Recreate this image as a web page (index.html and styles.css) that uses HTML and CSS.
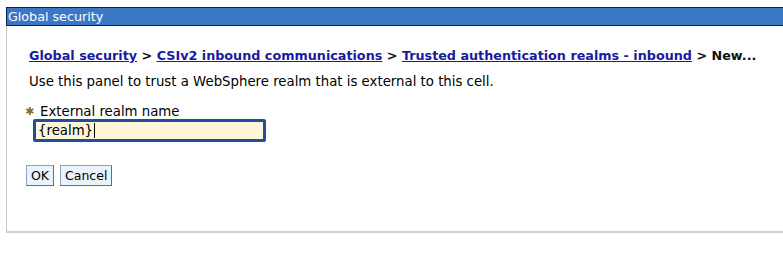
FILE: index.html
```html
<!DOCTYPE html>
<html>
<head>
<meta charset="utf-8">
<link rel="stylesheet" href="styles.css">
</head>
<body>
<div class="page">
  <div class="titlebar">Global security</div>
  <div class="panel">
    <div class="crumbs">
      <a href="#">Global security</a> &gt; <a href="#">CSIv2 inbound communications</a> &gt; <a href="#">Trusted authentication realms - inbound</a> &gt; New...
    </div>
    <p class="desc">Use this panel to trust a WebSphere realm that is external to this cell.</p>
    <div class="field">
      <div class="label"><span class="req">&#10033;</span>External realm name</div>
      <div class="input">{realm}<span class="caret"></span></div>
    </div>
    <div class="buttons">
      <button class="btn">OK</button>
      <button class="btn">Cancel</button>
    </div>
  </div>
</div>
</body>
</html>
```
FILE: styles.css
```css
html, body { margin: 0; padding: 0; background: #fff; }
body { font-family: "DejaVu Sans", Verdana, sans-serif; font-size: 13.3px; color: #000; }
.page { padding: 7px 0 0 6px; }
.titlebar {
  height: 17px;
  background: #3a78c6;
  border: 1px solid #14213d;
  border-right: none;
  color: #fff;
  font-family: Tahoma, "DejaVu Sans", sans-serif;
  font-size: 12.7px;
  line-height: 17px;
  padding-left: 1px;
}
.panel {
  border-left: 1px solid #c8c8c8;
  border-bottom: 2px solid #cfcfcf;
  height: 205px;
  padding: 0 0 0 22px;
}
.crumbs { padding-top: 22px; font-weight: bold; font-size: 12.75px; color: #111; line-height: 16px; }
.crumbs a { color: #1a1aa0; }
.desc { margin: 10px 0 0; line-height: 16px; }
.field { margin-top: 15px; }
.label { position: relative; line-height: 14px; padding-left: 11px; }
.req { position: absolute; left: -4px; top: 1px; color: #8a7030; font-size: 11px; line-height: 12px; }
.input {
  margin-left: 4px;
  width: 225px;
  height: 17px;
  border: 3px solid #1e4f99;
  border-radius: 2px;
  background: #fff6d9;
  line-height: 17px;
  padding-left: 2px;
}
.caret { display: inline-block; width: 1px; height: 15px; background: #000; vertical-align: -3px; margin-left: 1px; }
.buttons { margin-top: 23px; display: flex; gap: 6px; margin-left: -3px; }
.btn {
  font-family: Tahoma, "DejaVu Sans", sans-serif;
  font-size: 12.5px;
  height: 21px;
  padding: 0 4px;
  background: #eaf3fc;
  border: 1px solid #8ea2ba;
  border-bottom-color: #5a6f8a;
  border-right-color: #5a6f8a;
  color: #000;
  border-radius: 0;
}
```
